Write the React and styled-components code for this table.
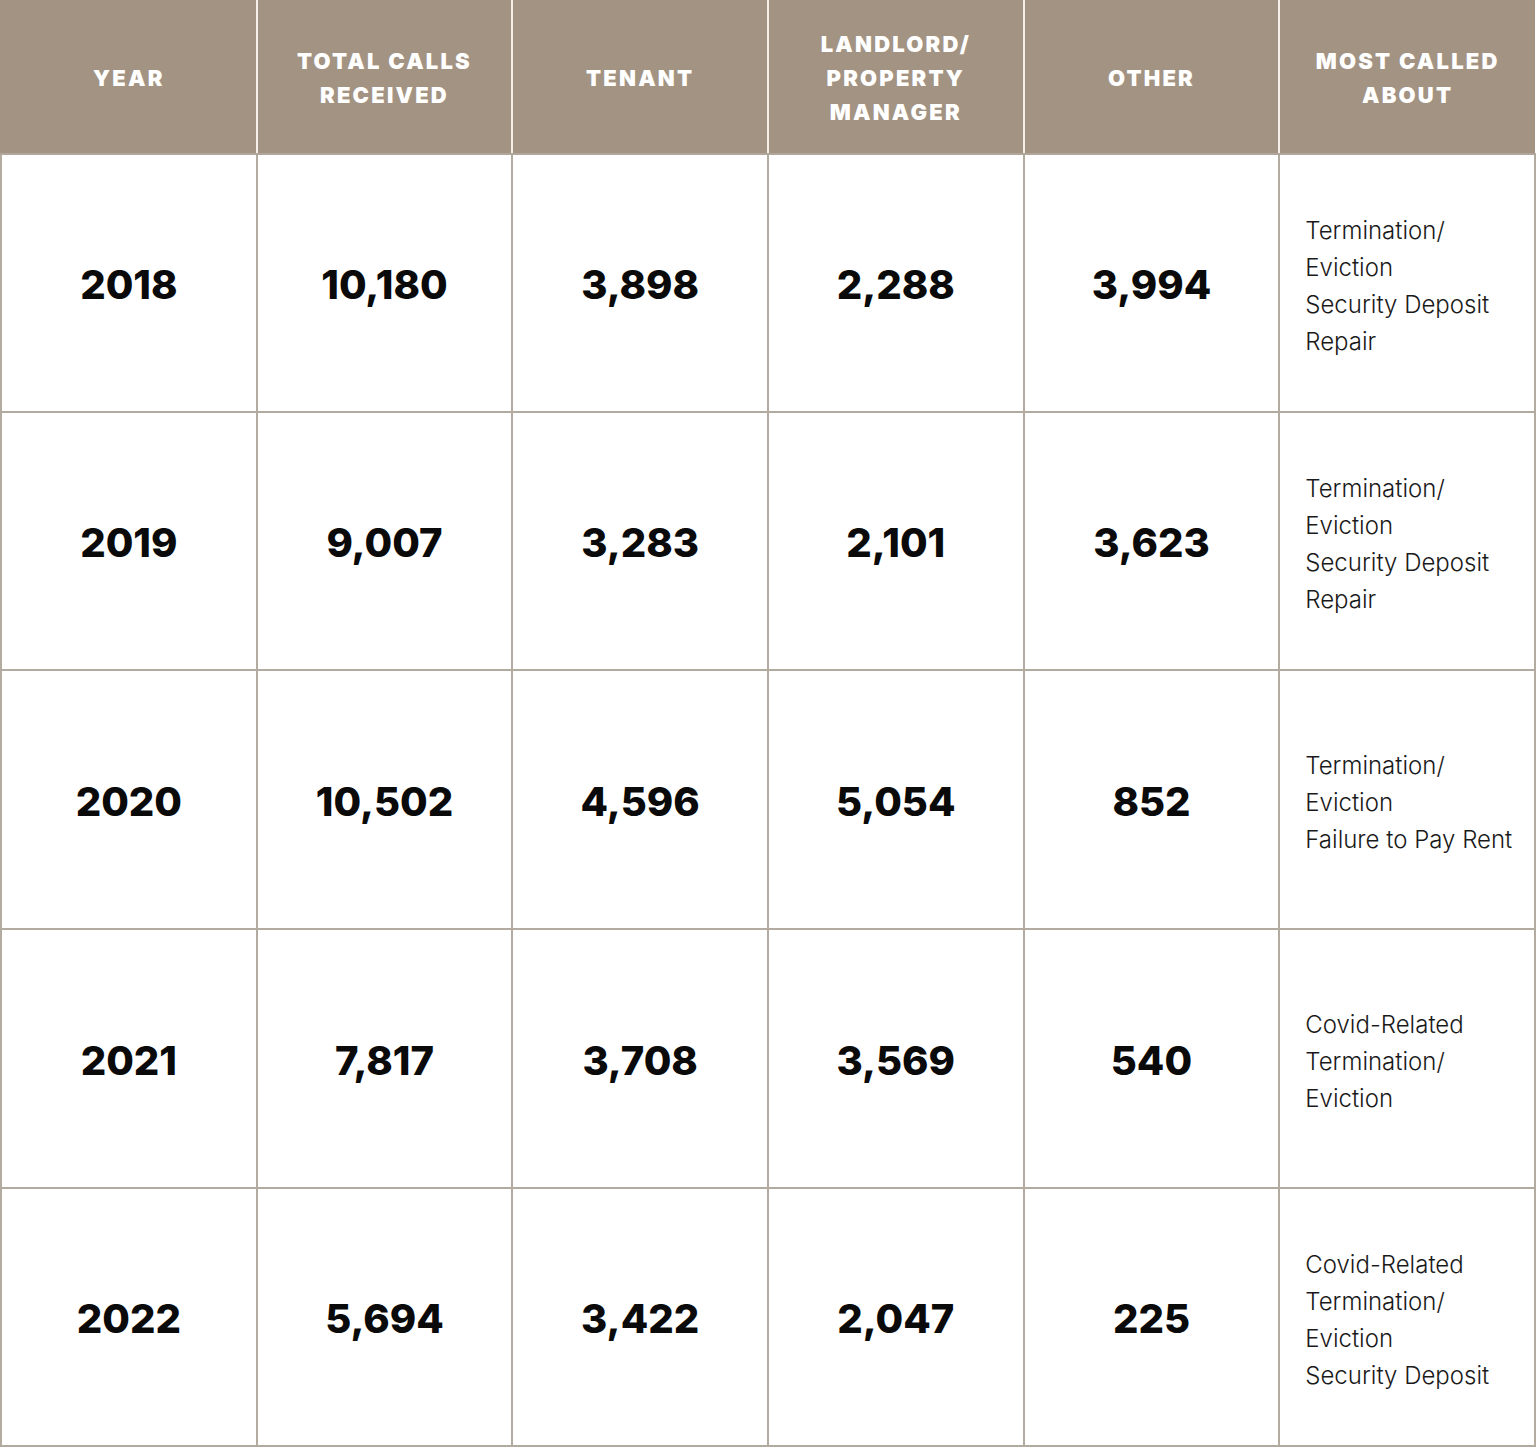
import React from 'react';
import styled, { createGlobalStyle } from 'styled-components';

const GlobalStyle = createGlobalStyle`
  body {
    margin: 0;
    background: #ffffff;
    font-family: Inter, "Liberation Sans", sans-serif;
  }
`;

const Table = styled.table`
  width: 1536px;
  border-collapse: collapse;
  table-layout: fixed;
`;

const HeadCell = styled.th`
  height: 151px;
  padding: 2px 10px 0;
  background: #a39383;
  color: #ffffff;
  font-size: 22px;
  font-weight: 900;
  letter-spacing: 2.2px;
  line-height: 34px;
  text-align: center;
  border-left: 2px solid #f4efe9;
  border-bottom: 2px solid #b0a69c;
  &:first-child {
    border-left: 2px solid #a39383;
  }
`;

const Row = styled.tr`
  height: ${(p) => p.$h}px;
`;

const NumCell = styled.td`
  border: 2px solid #b3aaa0;
  padding-top: 4px;
  text-align: center;
  vertical-align: middle;
  font-size: 40px;
  font-weight: 800;
  color: #0a0a0a;
`;

const TopicCell = styled.td`
  border: 2px solid #b3aaa0;
  padding: 6px 10px 0 25px;
  vertical-align: middle;
  font-size: 24px;
  font-weight: 300;
  line-height: 37px;
  color: #1a1a1a;
  letter-spacing: 0;
`;

const TopicLine = styled.div`
  white-space: nowrap;
`;

const headers = [
  ['YEAR'],
  ['TOTAL CALLS', 'RECEIVED'],
  ['TENANT'],
  ['LANDLORD/', 'PROPERTY', 'MANAGER'],
  ['OTHER'],
  ['MOST CALLED', 'ABOUT'],
];

const rows = [
  { year: '2018', h: 258, total: '10,180', tenant: '3,898', landlord: '2,288', other: '3,994', topics: ['Termination/', 'Eviction', 'Security Deposit', 'Repair'] },
  { year: '2019', h: 258, total: '9,007', tenant: '3,283', landlord: '2,101', other: '3,623', topics: ['Termination/', 'Eviction', 'Security Deposit', 'Repair'] },
  { year: '2020', h: 259, total: '10,502', tenant: '4,596', landlord: '5,054', other: '852', topics: ['Termination/', 'Eviction', 'Failure to Pay Rent'] },
  { year: '2021', h: 259, total: '7,817', tenant: '3,708', landlord: '3,569', other: '540', topics: ['Covid-Related', 'Termination/', 'Eviction'] },
  { year: '2022', h: 258, total: '5,694', tenant: '3,422', landlord: '2,047', other: '225', topics: ['Covid-Related', 'Termination/', 'Eviction', 'Security Deposit'] },
];

const App = () => (
  <>
    <GlobalStyle />
    <Table>
      <thead>
        <tr>
          {headers.map((lines, i) => (
            <HeadCell key={i}>
              {lines.map((l, j) => (
                <div key={j}>{l}</div>
              ))}
            </HeadCell>
          ))}
        </tr>
      </thead>
      <tbody>
        {rows.map((r) => (
          <Row key={r.year} $h={r.h}>
            <NumCell>{r.year}</NumCell>
            <NumCell>{r.total}</NumCell>
            <NumCell>{r.tenant}</NumCell>
            <NumCell>{r.landlord}</NumCell>
            <NumCell>{r.other}</NumCell>
            <TopicCell>
              {r.topics.map((t, j) => (
                <TopicLine key={j}>{t}</TopicLine>
              ))}
            </TopicCell>
          </Row>
        ))}
      </tbody>
    </Table>
  </>
);

export default App;
